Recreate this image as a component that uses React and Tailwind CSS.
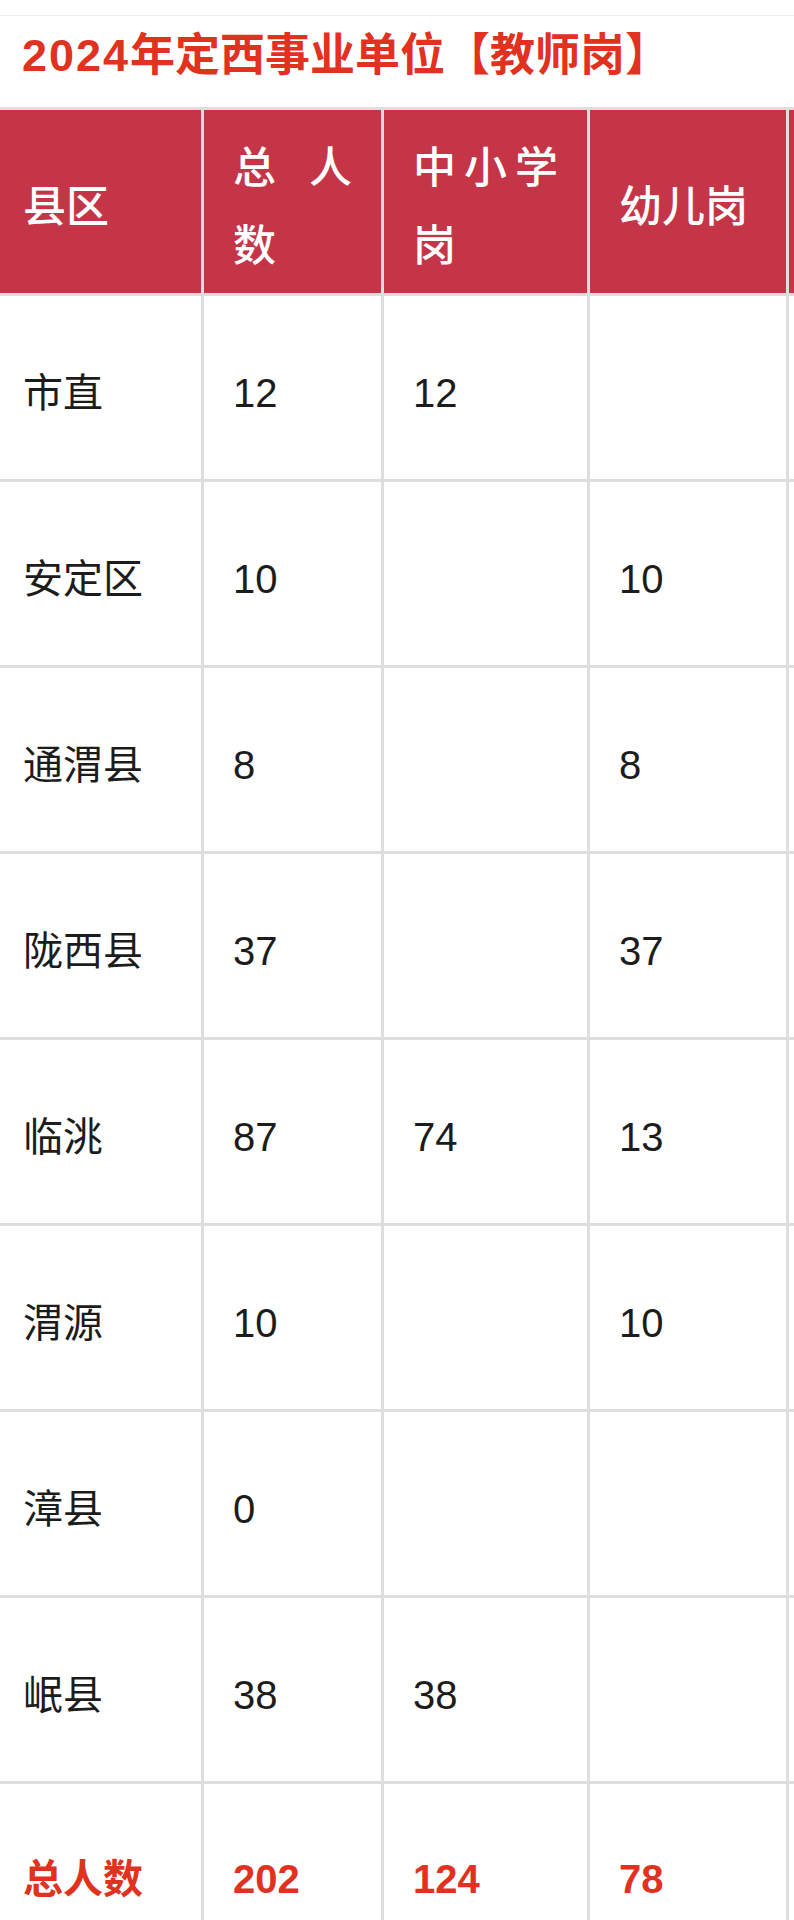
import React from 'react';

const rows = [
  ['市直', '12', '12', ''],
  ['安定区', '10', '', '10'],
  ['通渭县', '8', '', '8'],
  ['陇西县', '37', '', '37'],
  ['临洮', '87', '74', '13'],
  ['渭源', '10', '', '10'],
  ['漳县', '0', '', ''],
  ['岷县', '38', '38', ''],
];

const widths = ['w-[204px] pl-[23px] pr-[29px]', 'w-[180px] px-[29px]', 'w-[206px] px-[29px]', 'w-[199px] px-[29px]', 'w-[200px] px-[29px]'];

function Cell({ i, children, className = 'pt-[10px]' }) {
  return (
    <div className={`${widths[i]} shrink-0 h-full flex items-center border-r-[3px] border-[#dedede] ${className}`}>
      {children}
    </div>
  );
}

export default function App() {
  return (
    <div
      className="w-[794px] min-h-[1920px] bg-white overflow-hidden"
      style={{ fontFamily: '"Liberation Sans", "Noto Sans CJK SC", sans-serif' }}
    >
      {/* top rule */}
      <div className="h-[16px] border-b border-[#ececec]" />

      {/* Title */}
      <div className="pt-[17px] pb-[28px] pl-[22px]">
        <h1 className="text-[45px] leading-[46px] font-bold text-[#e0321f] whitespace-nowrap">
          <span className="tracking-[2px]">2024</span>年定西事业单位【教师岗】
        </h1>
      </div>

      {/* Table */}
      <div className="w-[989px]">
        <div className="flex h-[189px] border-y-[3px] border-[#dedede] text-white text-[43px] leading-[78px] font-medium">
          <Cell i={0} className="pt-[10px] bg-[#c53548]"><div className="w-full">县区</div></Cell>
          <Cell i={1} className="pt-[10px] bg-[#c53548]"><div className="w-full text-justify">总人数</div></Cell>
          <Cell i={2} className="pt-[10px] bg-[#c53548]"><div className="w-full text-justify">中小学岗</div></Cell>
          <Cell i={3} className="pt-[10px] bg-[#c53548]"><div className="w-full">幼儿岗</div></Cell>
          <Cell i={4} className="pt-[10px] bg-[#c53548]"><div className="w-full" /></Cell>
        </div>

        {rows.map((r) => (
          <div key={r[0]} className="flex h-[186px] border-b-[3px] border-[#dedede] text-[40px] leading-[50px] text-[#1c1c1c]">
            {r.map((v, i) => (
              <Cell key={i} i={i}>{v}</Cell>
            ))}
            <Cell i={4} />
          </div>
        ))}

        {/* totals */}
        <div className="flex h-[186px] text-[40px] leading-[50px] font-bold text-[#e0321f]">
          <Cell i={0} className="pt-[4px]">总人数</Cell>
          <Cell i={1} className="pt-[4px]">202</Cell>
          <Cell i={2} className="pt-[4px]">124</Cell>
          <Cell i={3} className="pt-[4px]">78</Cell>
          <Cell i={4} className="pt-[4px]" />
        </div>
      </div>
    </div>
  );
}
